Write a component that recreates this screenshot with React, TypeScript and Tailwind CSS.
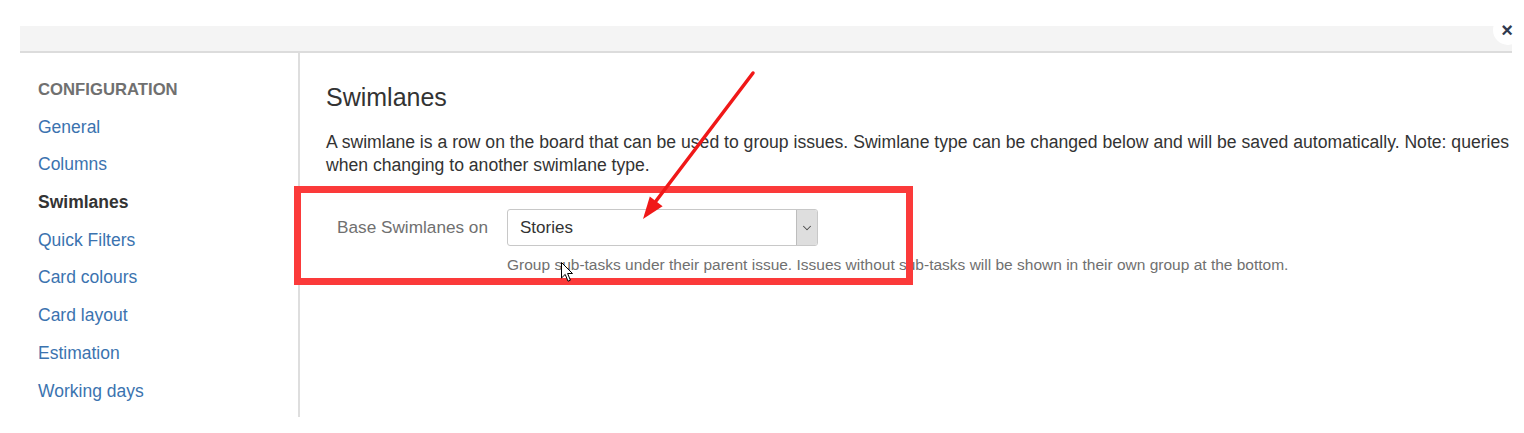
import { ChevronDown } from "lucide-react";

const navItems = [
  { label: "General" },
  { label: "Columns" },
  { label: "Swimlanes", active: true },
  { label: "Quick Filters" },
  { label: "Card colours" },
  { label: "Card layout" },
  { label: "Estimation" },
  { label: "Working days" },
];

const Sidebar = () => (
  <div className="w-[280px] shrink-0 border-r-2 border-[#dedede] pt-[27px] pl-[18px]">
    <p className="h-[20px] leading-[20px] text-[16.7px] font-bold text-[#707070] uppercase">
      Configuration
    </p>
    <ul className="mt-[8px]">
      {navItems.map((item) => (
        <li key={item.label} className="h-[37.7px] flex items-center">
          <a
            href="#"
            className={
              item.active
                ? "text-[17.5px] font-bold text-[#333333]"
                : "text-[17.5px] text-[#3b73af]"
            }
          >
            {item.label}
          </a>
        </li>
      ))}
    </ul>
  </div>
);

const SwimlaneSettings = () => (
  <div className="flex-1 min-w-0 overflow-hidden pl-[26px] pt-[29px]">
    <h2 className="text-[25px] leading-[30px] text-[#333333]">Swimlanes</h2>
    <div className="mt-[19px] text-[17.6px] leading-[23px] text-[#333333] whitespace-nowrap">
      <p>
        A swimlane is a row on the board that can be used to group issues. Swimlane type can be changed below and
        will be saved automatically. Note: queries
      </p>
      <p>when changing to another swimlane type.</p>
    </div>

    <div className="mt-[32px] flex">
      <label className="w-[162px] shrink-0 h-[37px] flex items-center justify-end text-[17.2px] text-[#707070]">
        Base Swimlanes on
      </label>
      <div className="ml-[19px]">
        <div className="w-[311px] h-[37px] flex border border-[#c8c8c8] rounded-[3px] bg-white">
          <span className="flex-1 flex items-center pl-[12px] text-[17px] text-[#333333]">Stories</span>
          <span className="w-[21px] flex items-center justify-center bg-[#dedede] border-l border-[#bdbdbd] rounded-r-[2px]">
            <ChevronDown className="w-[14px] h-[14px] text-[#4a4a4a]" strokeWidth={1.8} />
          </span>
        </div>
        <p className="mt-[10px] text-[15.5px] leading-[18px] text-[#707070] whitespace-nowrap">
          Group sub-tasks under their parent issue. Issues without sub-tasks will be shown in their own group at the
          bottom.
        </p>
      </div>
    </div>
  </div>
);

export default function App() {
  return (
    <div
      className="relative w-full h-[433px] bg-white overflow-hidden"
      style={{ fontFamily: '"Liberation Sans", Arial, sans-serif' }}
    >
      <div className="mx-[20px] mt-[26px] w-[1492px]">
        <div className="h-[27px] bg-[#f4f4f4] border-b-2 border-[#dcdcdc]" />
        <div className="flex h-[364px]">
          <Sidebar />
          <SwimlaneSettings />
        </div>
      </div>

      {/* close button */}
      <div className="absolute left-[1493px] top-[15px] w-[30px] h-[30px] rounded-full bg-white flex items-center justify-center">
        <span className="text-[20px] leading-none font-bold text-[#2f3a4f] -ml-[2px]">×</span>
      </div>

      {/* annotation: highlight box */}
      <div className="absolute left-[294px] top-[186px] w-[619px] h-[99px] border-[7px] border-[#fb3a3a]" />

      {/* annotation: arrow */}
      <svg className="absolute left-0 top-0" width="1524" height="433" viewBox="0 0 1524 433">
        <line x1="753" y1="73" x2="656" y2="201" stroke="#f01818" strokeWidth="3.5" strokeLinecap="round" />
        <polygon points="643,219 662.6,206.2 649.8,196.6" fill="#f01818" />
      </svg>

      {/* mouse pointer */}
      <svg className="absolute left-[561px] top-[262px]" width="14" height="22" viewBox="0 0 14 22">
        <path
          d="M0.5 0.5 L0.5 16 L4.2 12.4 L7 19.2 L9.4 18.2 L6.6 11.5 L11.5 11.5 Z"
          fill="#ffffff"
          stroke="#000000"
          strokeWidth="1"
          strokeLinejoin="round"
        />
      </svg>
    </div>
  );
}
